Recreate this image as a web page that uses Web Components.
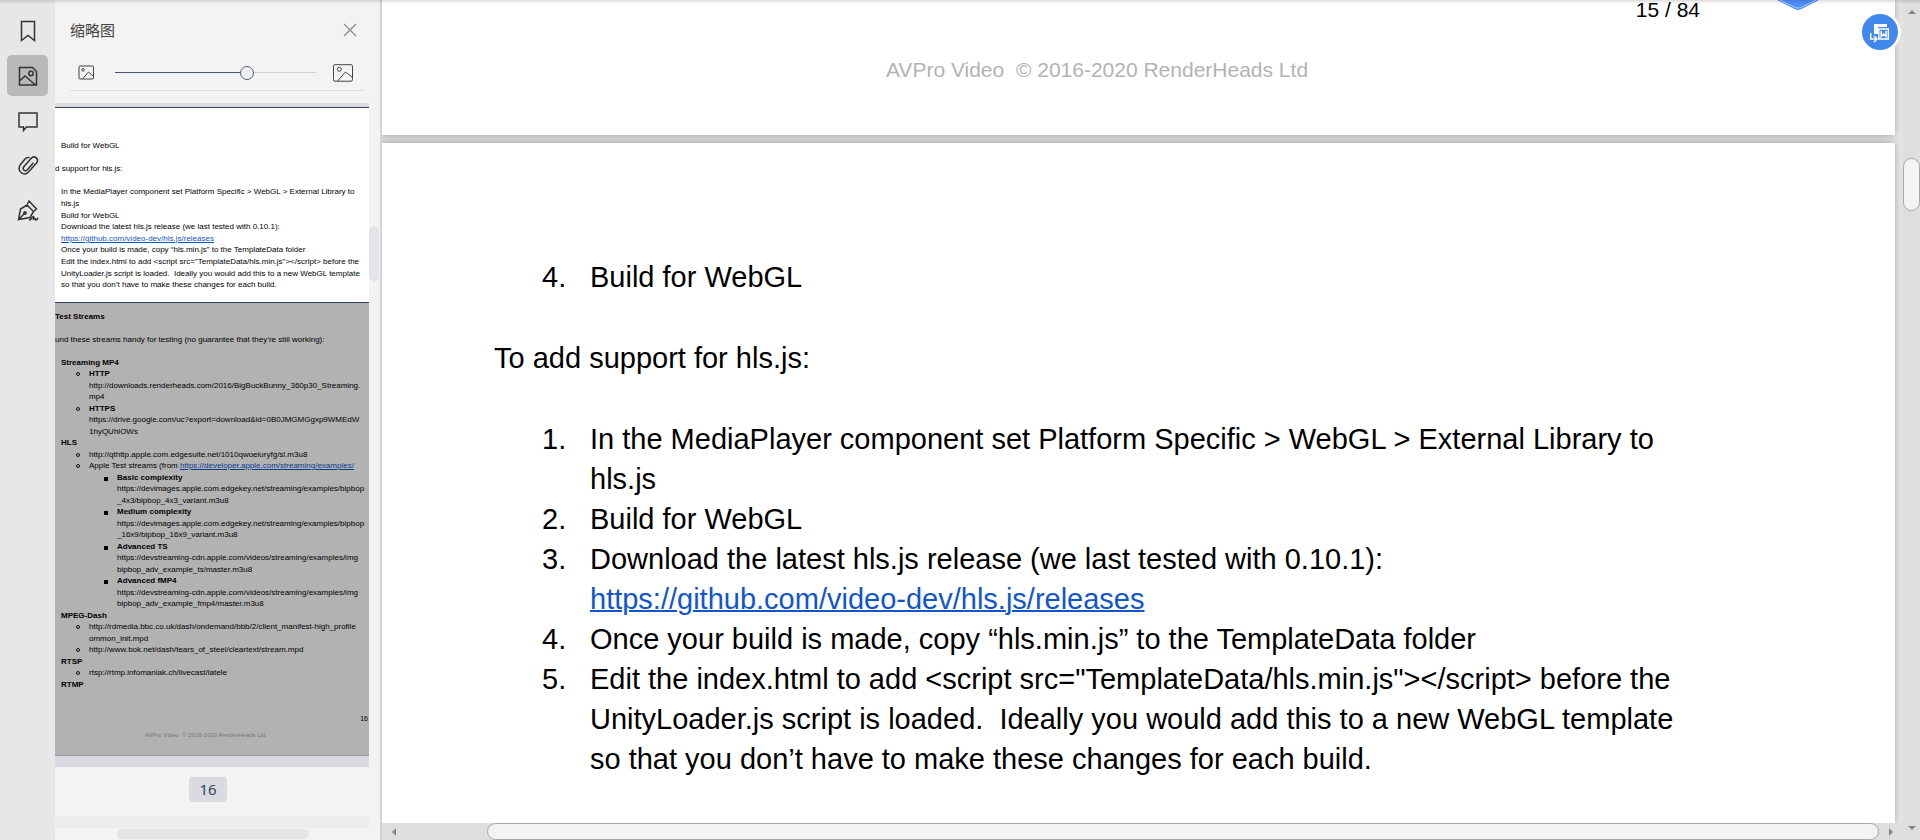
<!DOCTYPE html>
<html lang="zh-CN">
<head>
<meta charset="utf-8">
<title>PDF Reader</title>
<style>
html,body{margin:0;height:100%}
body{font-family:"Liberation Sans",Arial,sans-serif;background:#fff;color:#000}
</style>
</head>
<body>
<pdf-reader></pdf-reader>
<script>
const define = (name, markup, setup) => {
  const tpl = document.createElement('template');
  tpl.innerHTML = markup;
  customElements.define(name, class extends HTMLElement {
    constructor() {
      super();
      this.attachShadow({mode: 'open'}).append(tpl.content.cloneNode(true));
    }
    connectedCallback() { if (setup) setup(this, this.shadowRoot); }
  });
};

define('rail-button', `
<style>
:host{display:block}
button{display:grid;place-items:center;width:41px;height:41px;padding:0;border:0;border-radius:5px;background:none;color:#333;cursor:pointer}
:host([active]) button{background:#b9b9b9}
</style>
<button type="button"><slot></slot></button>`, (el, root) => {
  root.querySelector('button').setAttribute('aria-label', el.getAttribute('label'));
});

define('tool-rail', `
<style>
:host{display:flex;flex-direction:column;align-items:center;gap:4px;width:55px;padding-top:10px;box-sizing:border-box;background:#e7e7e7}
svg{display:block;width:24px;height:24px;fill:none;stroke:#333;stroke-width:1.5}
</style>
<rail-button label="书签"><svg viewBox="0 0 24 24"><path d="M5.5 2.5h13v19L12 16.5l-6.500 5z"/></svg></rail-button>
<rail-button label="缩略图" active><svg viewBox="0 0 24 24"><path d="M3.500 3.500h13l4 4v13.500h-17zM3.500 17l5.500-5 10.500 9"/><circle cx="15" cy="9.500" r="2.200"/></svg></rail-button>
<rail-button label="批注"><svg viewBox="0 0 24 24"><path d="M3 4h18v14H10.500l-3 3.500V18H3z"/></svg></rail-button>
<rail-button label="附件"><svg viewBox="0 0 24 24"><path d="M9.500 4.500l-5 6c-2 2.500-2 6 .5 8s5.500 1.500 7.500-.5l8-9c1.500-2 1.200-4-.3-5.200s-3.700-1-5.200.7l-7 8c-1.200 1.500-1 2.800-.1 3.600s2.400.8 3.500-.4l6-7M9.500 4.500c1.200-1 2.500-1.300 4-1"/></svg></rail-button>
<rail-button label="签名"><svg viewBox="0 0 24 24"><path d="M2.500 20.500l2-10.500 6.500-4 6.500 6.500-3.500 6zM2.500 20.500l6-6M11.500 5l1.500-3 7.500 8-2.500 2M13 20.800h1.500c3-5 4.500-3.500 2.500 0 1.500-2 2.500-1.500 2.500 0 1 .5 2-.5 2.500-2"/><circle cx="9" cy="14" r="1.200"/></svg></rail-button>`);

define('thumb-page', `
<style>
:host{display:grid;grid-auto-rows:12px 11px 12px 11px 12px;box-sizing:border-box;padding:8px 0 0 6px;overflow:hidden;font-size:8px;line-height:12px;white-space:nowrap}
::slotted(*){margin:0}
</style><slot></slot>`);

define('zoom-slider', `
<style>
:host{display:flex;align-items:center;height:34px;border-bottom:1px solid #dedee2;padding:0 12px 0 8px;margin:0 15px 12px 15px}
svg{display:block;fill:none;stroke:#444;flex:none}
label{display:flex;flex:1;margin:0 17px 0 20px}
input{appearance:none;flex:1;min-width:0;height:14px;margin:0;background:linear-gradient(#49566f,#49566f) 0 6px/66% 1px no-repeat,linear-gradient(#d0d0d0,#d0d0d0) 0 6px/100% 1px no-repeat}
input::-webkit-slider-thumb{appearance:none;box-sizing:border-box;width:14px;height:14px;border:1px solid #56627a;border-radius:50%;background:#efeff0}
</style>
<svg width="17" height="16" viewBox="0 0 17 16"><rect x="1" y="1" width="14.500" height="13" rx="1"/><circle cx="5" cy="4.800" r="1.300"/><path d="M4.500 14l6-7 5 4.500"/></svg>
<label><input type="range" min="0" max="100" value="67" aria-label="缩略图大小"></label>
<svg width="20" height="18" viewBox="0 0 20 18"><rect x=".5" y=".7" width="19" height="16.500" rx="1.500"/><circle cx="6.300" cy="5.300" r="2"/><path d="M4.500 17l8-9 7 5.500"/></svg>`);

define('thumbnail-panel', `
<style>
:host{display:flex;flex-direction:column;width:325px;box-sizing:border-box;position:relative;background:#f3f3f3;overflow:hidden}
header{display:flex;align-items:center;justify-content:space-between;height:26px;padding:17px 23px 0 15px;margin-bottom:13px}
h2{margin:0;font:400 15px/24px "Noto Sans CJK SC",sans-serif;color:#444}
header button{display:block;border:0;padding:0;background:none;width:14px;height:14px}
svg{display:block}
.list{width:314px;flex:1;display:flex;flex-direction:column;overflow:hidden}
.edge{height:4px;flex:none;background:#dadbe0;border-bottom:1px solid #3a4660}
.first{height:195px;flex:none;background:#fff;border-bottom:1px solid #34415c;padding-top:32px}
.second{height:453px;flex:none;grid-auto-rows:11px 12px;background:#b2b2b2;border-bottom:1px solid #92939c}
.i1{padding-left:28px}.i2{padding-left:56px}
.i1,.i2{position:relative}
.o::before{content:"";position:absolute;left:15px;top:4px;width:2px;height:2px;border:1px solid #111;border-radius:50%}
.q::before{content:"";position:absolute;left:43px;top:5px;width:4px;height:4px;background:#000}
a{color:#1155cc}
.second a{color:#0c3c90}
.out{margin-left:-6px}
.second .no{justify-self:end;grid-row:36;font-size:7px;padding-right:1px}
.foot{grid-row:37 / span 2;padding-left:84px;font-size:6px;line-height:20px;color:#777}
.tail{height:11px;flex:none;background:#dadbe0}
.badge{align-self:center;display:block;width:38px;height:25px;flex:none;margin:10px 8px 14px 0;border-radius:4px;background:#dadbe0;color:#34415c;text-align:center;font:15px/25px "Noto Sans",sans-serif}
.next{height:12px;flex:none;background:#ecedef}
.h{height:10px;width:192px;margin:1px 0 1px 62px;border-radius:5px;background:#e3e4e6;flex:none}
.v{position:absolute;right:1px;top:226px;width:10px;height:55px;border-radius:5px;background:#e3e4e7}
</style>
<header><h2>缩略图</h2><button type="button" aria-label="关闭"><svg width="14" height="14" viewBox="0 0 14 14" stroke="#888" stroke-width="1.200"><path d="M1 1l12 12M13 1L1 13"/></svg></button></header>
<zoom-slider></zoom-slider>
<div class="list">
<div class="edge"></div>
<thumb-page class="first">
<p>Build for WebGL</p><p></p>
<p><span class="out">d support for hls.js:</span></p><p></p>
<p>In the MediaPlayer component set Platform Specific &gt; WebGL &gt; External Library to</p>
<p>hls.js</p><p>Build for WebGL</p>
<p>Download the latest hls.js release (we last tested with 0.10.1):</p>
<p><a href="#releases">https://github.com/video-dev/hls.js/releases</a></p>
<p>Once your build is made, copy “hls.min.js” to the TemplateData folder</p>
<p>Edit the index.html to add &lt;script src="TemplateData/hls.min.js"&gt;&lt;/script&gt; before the</p>
<p>UnityLoader.js script is loaded.&nbsp; Ideally you would add this to a new WebGL template</p>
<p>so that you don’t have to make these changes for each build.</p>
</thumb-page>
<thumb-page class="second">
<b><span class="out">Test Streams</span></b><p></p>
<p><span class="out">und these streams handy for testing (no guarantee that they’re still working):</span></p><p></p>
<b>Streaming MP4</b>
<b class="i1 o">HTTP</b>
<p class="i1">http://downloads.renderheads.com/2016/BigBuckBunny_360p30_Streaming.</p>
<p class="i1">mp4</p>
<b class="i1 o">HTTPS</b>
<p class="i1">https://drive.google.com/uc?export=download&amp;id=0B0JMGMGgxp9WMEdW</p>
<p class="i1">1hyQUhlOWs</p>
<b>HLS</b>
<p class="i1 o">http://qthttp.apple.com.edgesuite.net/1010qwoeiuryfg/sl.m3u8</p>
<p class="i1 o">Apple Test streams (from <a href="#streaming">https://developer.apple.com/streaming/examples/</a></p>
<b class="i2 q">Basic complexity</b>
<p class="i2">https://devimages.apple.com.edgekey.net/streaming/examples/bipbop</p>
<p class="i2">_4x3/bipbop_4x3_variant.m3u8</p>
<b class="i2 q">Medium complexity</b>
<p class="i2">https://devimages.apple.com.edgekey.net/streaming/examples/bipbop</p>
<p class="i2">_16x9/bipbop_16x9_variant.m3u8</p>
<b class="i2 q">Advanced TS</b>
<p class="i2">https://devstreaming-cdn.apple.com/videos/streaming/examples/img</p>
<p class="i2">bipbop_adv_example_ts/master.m3u8</p>
<b class="i2 q">Advanced fMP4</b>
<p class="i2">https://devstreaming-cdn.apple.com/videos/streaming/examples/img</p>
<p class="i2">bipbop_adv_example_fmp4/master.m3u8</p>
<b>MPEG-Dash</b>
<p class="i1 o">http://rdmedia.bbc.co.uk/dash/ondemand/bbb/2/client_manifest-high_profile</p>
<p class="i1">ommon_init.mpd</p>
<p class="i1 o">http://www.bok.net/dash/tears_of_steel/cleartext/stream.mpd</p>
<b>RTSP</b>
<p class="i1 o">rtsp://rtmp.infomaniak.ch/livecast/latele</p>
<b>RTMP</b>
<p class="no">16</p>
<p class="foot">AVPro Video &nbsp;© 2016-2020 RenderHeads Ltd</p>
</thumb-page>
<div class="tail"></div>
<span class="badge">16</span>
<div class="next"></div>
<div class="h"></div>
</div>
<div class="v"></div>`);

define('scroll-bar', `
<style>
:host{display:flex;align-items:center;background:#dedede;box-sizing:border-box}
:host([vertical]){flex-direction:column}
.arrow{display:grid;place-items:center;padding:0;border:0;background:none;flex:none;width:24px;height:17px}
:host([vertical]) .arrow{width:17px;height:24px}
svg{display:block;width:8px;height:8px;fill:#858585}
:host([vertical]) svg{transform:rotate(90deg)}
.track{display:flex;flex:1;align-self:stretch}
:host([vertical]) .track{flex-direction:column}
.lead{flex:var(--lead)}.rest{flex:var(--rest)}
.thumb{flex:var(--thumb);box-sizing:border-box;border:1px solid #a6a6a6;border-radius:9px;background:#f3f3f3}
</style>
<button type="button" class="arrow" aria-label="back"><svg viewBox="0 0 8 8"><path d="M2 4l4-4v8z"/></svg></button>
<div class="track"><div class="lead"></div><div class="thumb"></div><div class="rest"></div></div>
<button type="button" class="arrow" aria-label="forward"><svg viewBox="0 0 8 8"><path d="M6 4L2 0v8z"/></svg></button>`);

define('doc-page', `
<style>
:host{display:block;box-sizing:border-box;background:#fff;box-shadow:0 0 6px #0004;padding:0 195px 0 112px;margin-right:8px;font-size:29px;line-height:40px}
</style><slot></slot>`);

define('document-view', `
<style>
:host{display:grid;grid-template:minmax(0,1fr) 17px / minmax(0,1fr) 17px;position:relative;background:#dedede;min-width:0}
.pages{display:flex;flex-direction:column;gap:8px;overflow:hidden;background:linear-gradient(90deg,#dadada calc(100% - 24px),#e4e4e4 calc(100% - 8px))}
.prev{flex:none;height:135px}
.cur{flex:1;padding-top:114px}
.no{margin:0;text-align:right;font-size:21px;line-height:20px}
.foot{margin:38px 0 0;text-align:center;font-size:21px;line-height:24px;color:#b3b3b3;white-space:pre}
.cur p,ol{margin:0 0 41px}
ol{list-style:none;padding:0 0 0 48px;white-space:nowrap}
li{display:grid;grid-template-columns:48px 1fr}
a{color:#1155cc;text-decoration-thickness:2px}
.float{position:absolute;right:22px;top:14px;width:36px;height:36px;padding:0;border:0;border-radius:50%;background:#4087ee;box-shadow:2px 0 0 1px #fff}
.gem{position:absolute;right:101px;top:0}
svg{display:block}
scroll-bar{--lead:81;--thumb:1392;--rest:0}
scroll-bar[vertical]{grid-area:1/2/3/3;--lead:134;--thumb:51;--rest:607}
</style>
<div class="pages">
<doc-page class="prev"><p class="no">15 / 84</p><p class="foot">AVPro Video  © 2016-2020 RenderHeads Ltd</p></doc-page>
<doc-page class="cur">
<ol><li><span>4.</span><span>Build for WebGL</span></li></ol>
<p>To add support for hls.js:</p>
<ol>
<li><span>1.</span><span>In the MediaPlayer component set Platform Specific &gt; WebGL &gt; External Library to<br>hls.js</span></li>
<li><span>2.</span><span>Build for WebGL</span></li>
<li><span>3.</span><span>Download the latest hls.js release (we last tested with 0.10.1):<br><a href="#releases">https://github.com/video-dev/hls.js/releases</a></span></li>
<li><span>4.</span><span>Once your build is made, copy “hls.min.js” to the TemplateData folder</span></li>
<li><span>5.</span><span>Edit the index.html to add &lt;script src="TemplateData/hls.min.js"&gt;&lt;/script&gt; before the<br>UnityLoader.js script is loaded.&nbsp; Ideally you would add this to a new WebGL template<br>so that you don’t have to make these changes for each build.</span></li>
</ol>
</doc-page>
</div>
<scroll-bar vertical></scroll-bar>
<scroll-bar></scroll-bar>
<svg class="gem" width="42" height="11" viewBox="0 0 42 11"><path d="M0 0h42L25 8.800q-4 2.200-8 0z" fill="#4f8dfb"/><path d="M3 0l15 7.500q3 1.300 6 0L39 0" fill="none" stroke="#a9c8ff"/></svg>
<button class="float" type="button" aria-label="转换"><svg width="36" height="36" viewBox="0 0 36 36"><path d="M12 10h13v3h-9v7h-4z" fill="#fff"/><rect x="16.800" y="15" width="9.500" height="10" fill="none" stroke="#fff" stroke-width="1.500"/><path d="M19.200 17v5.500l2.400-2.500 2.400 2.500V17" fill="none" stroke="#fff" stroke-width="1.500"/><path d="M8.700 19v6h6M12 22l3 3-3 3" fill="none" stroke="#fff" stroke-width="1.500"/></svg></button>`);

define('pdf-reader', `
<style>
:host{display:grid;grid-template-columns:55px 325px minmax(0,1fr);height:100vh;min-height:600px;position:relative}
document-view{border-left:2px solid #d3d3d8}
.shade{position:absolute;inset:0 0 auto;height:4px;background:linear-gradient(#0002,#0000);pointer-events:none}
</style>
<tool-rail></tool-rail>
<thumbnail-panel></thumbnail-panel>
<document-view></document-view>
<div class="shade"></div>`);
</script>
</body>
</html>
